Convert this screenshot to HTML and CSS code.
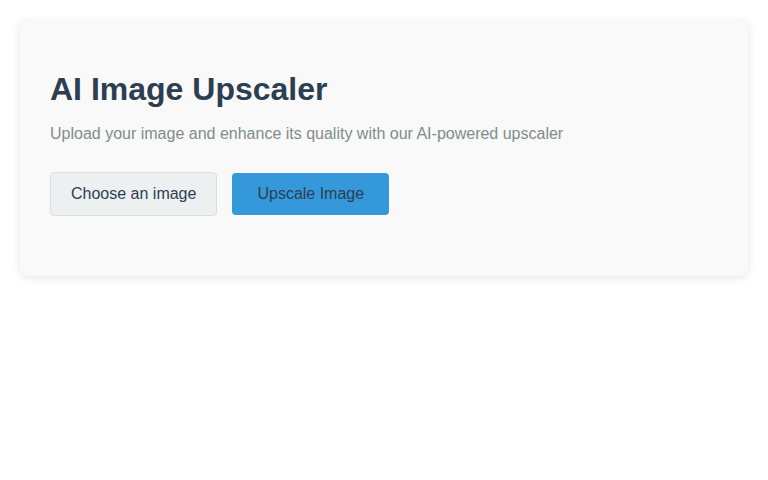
FILE: index.html
```html
<!DOCTYPE html>
<html lang="en">
<head>
<meta charset="utf-8">
<title>AI Image Upscaler</title>
<link rel="stylesheet" href="styles.css">
</head>
<body>
<div class="card">
  <h1 class="title">AI Image Upscaler</h1>
  <p class="subtitle">Upload your image and enhance its quality with our AI-powered upscaler</p>
  <div class="actions">
    <label class="btn btn-file">Choose an image</label>
    <button class="btn btn-primary" type="button">Upscale Image</button>
  </div>
</div>
</body>
</html>
```
FILE: styles.css
```css
* { box-sizing: border-box; }
html, body { margin: 0; background: #ffffff; }
body {
  padding: 20px;
  font-family: "Liberation Sans", Arial, sans-serif;
}
.card {
  background: #f9f9f9;
  border-radius: 8px;
  box-shadow: 0 2px 10px rgba(0,0,0,0.1);
  padding: 30px;
}
.title {
  font-size: 32px;
  font-weight: 700;
  color: #2c3e50;
  margin: 21px 0 17px;
}
.subtitle {
  font-size: 16px;
  color: #7f8c8d;
  margin: 0;
}
.actions {
  display: flex;
  align-items: center;
  gap: 15px;
  margin: 29px 0 30px;
}
.btn {
  font-family: "Liberation Sans", Arial, sans-serif;
  font-size: 16px;
  line-height: 18px;
  border-radius: 4px;
  color: #2c3e50;
  cursor: pointer;
}
.btn-file {
  display: inline-block;
  background: #ecf0f1;
  border: 1px solid #dddddd;
  padding: 12px 20px;
}
.btn-primary {
  background: #3498db;
  border: none;
  padding: 12px 25px;
}
```
